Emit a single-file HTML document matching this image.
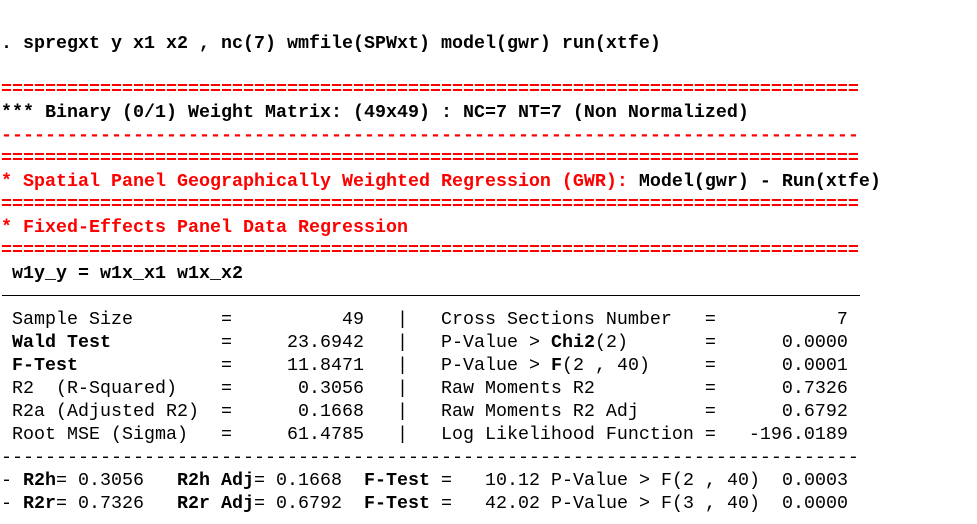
<!DOCTYPE html>
<html><head><meta charset="utf-8"><style>
html,body{margin:0;padding:0;background:#fff;width:977px;height:524px;overflow:hidden}
pre{position:absolute;left:1px;top:32px;margin:0;font-family:"Liberation Mono","Courier New",monospace;font-size:18.33px;line-height:23px;color:#000;white-space:pre}
.b{font-weight:bold}
.r{color:#f00;font-weight:bold}
.hr{position:absolute;left:2px;width:858px;top:295px;height:1px;background:#000}
</style></head><body>
<pre><span class="b">. spregxt y x1 x2 , nc(7) wmfile(SPWxt) model(gwr) run(xtfe)</span>

<span class="r">==============================================================================</span>
<span class="b">*** Binary (0/1) Weight Matrix: (49x49) : NC=7 NT=7 (Non Normalized)</span>
<span class="r">------------------------------------------------------------------------------</span>
<span class="r">==============================================================================</span>
<span class="r">* Spatial Panel Geographically Weighted Regression (GWR):</span><span class="b"> Model(gwr) - Run(xtfe)</span>
<span class="r">==============================================================================</span>
<span class="r">* Fixed-Effects Panel Data Regression</span>
<span class="r">==============================================================================</span>
<span class="b"> w1y_y = w1x_x1 w1x_x2</span>

 Sample Size        =          49   |   Cross Sections Number   =           7
 <span class="b">Wald Test</span>          =     23.6942   |   P-Value &gt; <span class="b">Chi2</span>(2)       =      0.0000
 <span class="b">F-Test</span>             =     11.8471   |   P-Value &gt; <span class="b">F</span>(2 , 40)     =      0.0001
 R2  (R-Squared)    =      0.3056   |   Raw Moments R2          =      0.7326
 R2a (Adjusted R2)  =      0.1668   |   Raw Moments R2 Adj      =      0.6792
 Root MSE (Sigma)   =     61.4785   |   Log Likelihood Function =   -196.0189
------------------------------------------------------------------------------
- <span class="b">R2h</span>= 0.3056   <span class="b">R2h Adj</span>= 0.1668  <span class="b">F-Test</span> =   10.12 P-Value &gt; F(2 , 40)  0.0003
- <span class="b">R2r</span>= 0.7326   <span class="b">R2r Adj</span>= 0.6792  <span class="b">F-Test</span> =   42.02 P-Value &gt; F(3 , 40)  0.0000</pre>
<div class="hr"></div>
</body></html>
